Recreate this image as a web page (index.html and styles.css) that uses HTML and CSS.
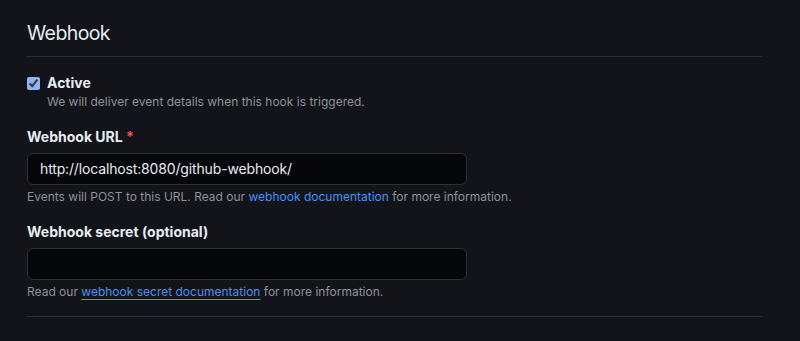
FILE: index.html
```html
<!DOCTYPE html>
<html lang="en">
<head>
<meta charset="utf-8">
<link rel="stylesheet" href="styles.css">
</head>
<body>
<div class="page">
  <div class="subhead">
    <h2 class="subhead-heading">Webhook</h2>
  </div>
  <div class="form-checkbox">
    <input type="checkbox" class="check" checked>
    <div class="check-text">
      <label class="check-label">Active</label>
      <p class="note">We will deliver event details when this hook is triggered.</p>
    </div>
  </div>
  <div class="form-group">
    <label class="field-label">Webhook URL <span class="req">*</span></label>
    <div class="input">http://localhost:8080/github-webhook/</div>
    <p class="note">Events will POST to this URL. Read our <a class="link">webhook documentation</a> for more information.</p>
  </div>
  <div class="form-group">
    <label class="field-label">Webhook secret (optional)</label>
    <div class="input"></div>
    <p class="note">Read our <a class="link underline">webhook secret documentation</a> for more information.</p>
  </div>
  <div class="divider"></div>
</div>
</body>
</html>
```

FILE: styles.css
```css
html, body {
  margin: 0;
  padding: 0;
  background: #131419;
  height: 100%;
}
body {
  font-family: Inter, "Liberation Sans", sans-serif;
  color: #e6edf3;
}
.page {
  width: 735px;
  margin-left: 27px;
  padding-top: 18px;
}
.subhead {
  border-bottom: 1px solid #2a2d33;
  padding-bottom: 8px;
}
.subhead-heading {
  margin: 0;
  font-size: 19.5px;
  letter-spacing: -0.6px;
  line-height: 30px;
  font-weight: 400;
}
.form-checkbox {
  display: flex;
  gap: 7px;
  margin-top: 16px;
}
.check {
  margin: 4px 0 0 0;
  width: 13px;
  height: 13px;
  accent-color: #8fb4f5;
}
.check-label {
  display: block;
  font-size: 14px;
  font-weight: 700;
  line-height: 20px;
}
.note {
  margin: 0;
  font-size: 12px;
  line-height: 18px;
  color: #8b929b;
}
.form-group {
  margin-top: 16px;
}
.field-label {
  display: block;
  font-size: 14px;
  font-weight: 700;
  line-height: 20px;
  margin-bottom: 6px;
}
.req {
  color: #f85149;
}
.input {
  box-sizing: border-box;
  width: 440px;
  height: 32px;
  border: 1px solid #2c3037;
  border-radius: 6px;
  background: #05070b;
  padding: 0 12px;
  font-size: 14px;
  letter-spacing: -0.15px;
  line-height: 30px;
  color: #e6edf3;
  margin-bottom: 3px;
}
.link {
  color: #4493f8;
  text-decoration: none;
}
.link.underline {
  text-decoration: underline;
  text-underline-offset: 3px;
}
.divider {
  border-top: 1px solid #2a2d33;
  margin-top: 15px;
}
```
